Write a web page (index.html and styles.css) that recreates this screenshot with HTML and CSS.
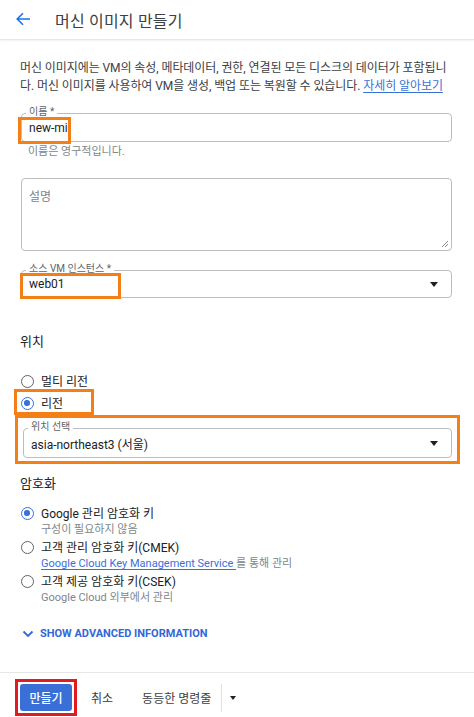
FILE: index.html
```html
<!DOCTYPE html>
<html lang="ko">
<head>
<meta charset="utf-8">
<link rel="stylesheet" href="styles.css">
</head>
<body>
<header class="topbar">
  <svg class="back" width="16" height="16" viewBox="0 0 16 16"><path d="M15 8H2.5M8 2.2L2.2 8 8 13.8" fill="none" stroke="#1a73e8" stroke-width="1.6"/></svg>
  <h1 class="title">머신 이미지 만들기</h1>
</header>
<main class="content">
  <p class="intro">머신 이미지에는 VM의 속성, 메타데이터, 권한, 연결된 모든 디스크의 데이터가 포함됩니다. 머신 이미지를 사용하여 VM을 생성, 백업 또는 복원할 수 있습니다. <a class="link more">자세히 알아보기</a></p>

  <div class="field name-field">
    <span class="flabel">이름 *</span>
    <span class="fvalue">new-mi</span>
    <span class="mark mark-name"></span>
  </div>
  <p class="hint">이름은 영구적입니다.</p>

  <div class="field textarea">
    <span class="placeholder">설명</span>
    <svg class="grip" width="8" height="8" viewBox="0 0 8 8"><path d="M7 1L1 7M7 4L4 7" stroke="#888" stroke-width="1"/></svg>
  </div>

  <div class="field select src-field">
    <span class="flabel">소스 VM 인스턴스 *</span>
    <span class="fvalue">web01</span>
    <span class="caret"></span>
    <span class="mark mark-src"></span>
  </div>

  <h2 class="section">위치</h2>
  <div class="radios loc">
    <div class="radio"><span class="dot"></span><span class="rlabel">멀티 리전</span></div>
    <div class="radio on"><span class="dot"></span><span class="rlabel">리전</span><span class="mark mark-region"></span></div>
  </div>
  <div class="loc-wrap">
    <div class="field select loc-field">
      <span class="flabel">위치 선택</span>
      <span class="fvalue">asia-northeast3 (서울)</span>
      <span class="caret"></span>
    </div>
  </div>

  <h2 class="section enc">암호화</h2>
  <div class="radios enc-list">
    <div class="radio on"><span class="dot"></span><div class="rtext"><span class="rlabel">Google 관리 암호화 키</span><span class="sub">구성이 필요하지 않음</span></div></div>
    <div class="radio"><span class="dot"></span><div class="rtext"><span class="rlabel">고객 관리 암호화 키(CMEK)</span><span class="sub"><a class="link">Google Cloud Key Management Service </a> 를 통해 관리</span></div></div>
    <div class="radio"><span class="dot"></span><div class="rtext"><span class="rlabel">고객 제공 암호화 키(CSEK)</span><span class="sub">Google Cloud 외부에서 관리</span></div></div>
  </div>

  <div class="advanced">
    <svg width="12" height="8" viewBox="0 0 12 8"><path d="M1.5 1.5L6 6 10.5 1.5" fill="none" stroke="#3367d6" stroke-width="1.8"/></svg>
    <span>SHOW ADVANCED INFORMATION</span>
  </div>
</main>
<footer class="actions">
  <span class="redmark"><button class="btn primary">만들기</button></span>
  <button class="btn text">취소</button>
  <button class="btn text">동등한 명령줄</button>
  <span class="vsep"></span>
  <span class="caret small"></span>
</footer>
</body>
</html>
```

FILE: styles.css
```css
* { box-sizing: border-box; }
html, body { margin: 0; padding: 0; background: #fff; }
body {
  width: 474px;
  height: 717px;
  overflow: hidden;
  position: relative;
  font-family: Roboto, "Noto Sans CJK KR", sans-serif;
  color: #202124;
}
.topbar {
  height: 40px;
  display: flex;
  align-items: center;
  padding-left: 15px;
  border-bottom: 1px solid #e8e8e8;
  box-shadow: 0 1px 2px rgba(0,0,0,0.06);
}
.back { margin-top: -1px; }
.title {
  margin: 0 0 0 24px;
  font-size: 16px;
  font-weight: 400;
  color: #3c4043;
  letter-spacing: 0.2px;
}
.content { padding: 0 22px 0 21px; }
.intro {
  margin: 19px -6px 0 -1px;
  font-size: 12px;
  line-height: 18px;
  color: #3c4043;
  letter-spacing: -0.08px;
}
.link { color: #3b6fd8; text-decoration: underline; text-underline-offset: 2px; }
.more { display: inline-block; line-height: 16px; }
.field {
  position: relative;
  border: 1px solid #bdbdbd;
  border-radius: 4px;
  display: flex;
  align-items: center;
  padding-left: 7px;
  font-size: 12px;
}
.flabel {
  position: absolute;
  left: 4px;
  top: -8px;
  padding: 0 3px;
  background: #fff;
  font-size: 10px;
  line-height: 12px;
  color: #5f6368;
}
.fvalue { color: #202124; }
.name-field { margin-top: 18px; height: 29px; }
.hint {
  margin: 3px 0 0 7px;
  font-size: 11px;
  line-height: 14px;
  color: #80868b;
}
.textarea {
  margin-top: 19px;
  height: 73px;
  align-items: flex-start;
  padding-top: 8px;
}
.placeholder { font-size: 12px; color: #80868b; }
.grip { position: absolute; right: 2px; bottom: 2px; }
.select { height: 28px; }
.src-field { margin-top: 19px; }
.caret {
  position: absolute;
  right: 13px;
  top: 50%;
  margin-top: -2px;
  width: 0; height: 0;
  border-left: 4.5px solid transparent;
  border-right: 4.5px solid transparent;
  border-top: 5px solid #202124;
}
.mark {
  position: absolute;
  border: 3px solid #f57f17;
  pointer-events: none;
}
.mark-name { left: -4px; top: 3px; width: 53px; height: 27px; }
.mark-src { left: -2px; top: 2px; width: 101px; height: 26px; }
.section {
  margin: 35px 0 0 -1px;
  font-size: 13px;
  font-weight: 400;
  line-height: 18px;
  color: #202124;
}
.radios { display: flex; flex-direction: column; }
.loc { margin-top: 23px; gap: 6px; }
.radio {
  position: relative;
  display: flex;
  align-items: flex-start;
  font-size: 12px;
  line-height: 16px;
}
.dot {
  flex: none;
  width: 13px; height: 13px;
  margin: 1px 7px 0 0;
  border: 1.6px solid #5f6368;
  border-radius: 50%;
  position: relative;
}
.radio.on .dot { border-color: #3b6fd8; }
.radio.on .dot::after {
  content: "";
  position: absolute;
  left: 2.2px; top: 2.2px;
  width: 5.4px; height: 5.4px;
  border-radius: 50%;
  background: #3b6fd8;
}
.mark-region { left: -7px; top: -7px; width: 80px; height: 26px; }
.loc-wrap {
  margin: 3px -8px 0 -6px;
  padding: 10px 5px 3px 5px;
  border: 3px solid #f57f17;
}
.loc-field { height: 30px; }
.loc-field .caret { right: 13px; }
.enc { margin-top: 11px; }
.enc-list { margin-top: 13px; gap: 3px; }
.rtext { display: flex; flex-direction: column; }
.sub { font-size: 11px; line-height: 15px; color: #80868b; }
.sub .link { color: #3b6fd8; }
.advanced {
  margin-top: 22px;
  display: flex;
  align-items: center;
  gap: 6px;
  padding-left: 1px;
  font-size: 11px;
  font-weight: 700;
  color: #3367d6;
  letter-spacing: 0;
}
.actions {
  position: absolute;
  left: 0; right: 0;
  top: 672px;
  border-top: 1px solid #e6e6e6;
  display: flex;
  align-items: center;
  padding: 6px 0 0 15px;
  font-family: Roboto, "Noto Sans CJK KR", sans-serif;
}
.redmark {
  display: flex;
  border: 3px solid #e11b22;
  padding: 2px;
  margin-right: 5px;
}
.btn {
  font-family: inherit;
  font-size: 12px;
  border: none;
  background: none;
  height: 27px;
  padding: 0 9px;
  color: #3c4043;
  cursor: pointer;
}
.primary {
  background: #3b6fd8;
  color: #fff;
  border-radius: 3px;
  width: 52px;
  font-weight: 500;
}
.text + .text { margin-left: 11px; }
.vsep { width: 1px; height: 28px; background: #e0e0e0; margin-left: 1px; }
.caret.small {
  position: static;
  margin: 0 0 0 8px;
  border-left-width: 3.5px;
  border-right-width: 3.5px;
  border-top-width: 4px;
}
```
